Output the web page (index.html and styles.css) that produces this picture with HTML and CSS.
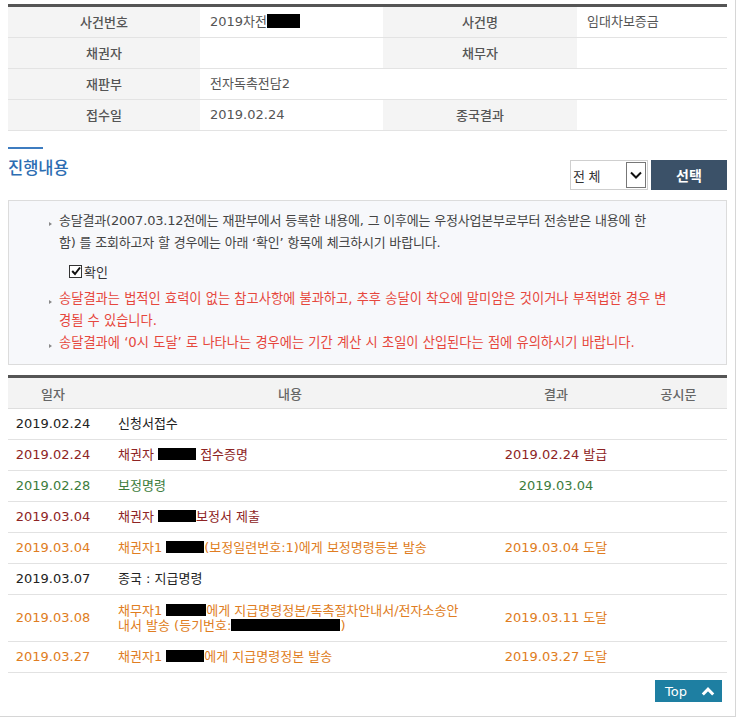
FILE: index.html
```html
<!DOCTYPE html>
<html lang="ko">
<head>
<meta charset="utf-8">
<title>사건 진행내용</title>
<link rel="stylesheet" href="styles.css">
</head>
<body>
<div class="page">
  <table class="info">
    <colgroup><col class="c-l1"><col class="c-v1"><col class="c-l2"><col class="c-v2"></colgroup>
    <tr><th>사건번호</th><td>2019차전<span class="redact redact-top"></span></td><th>사건명</th><td>임대차보증금</td></tr>
    <tr><th>채권자</th><td></td><th>채무자</th><td></td></tr>
    <tr><th>재판부</th><td colspan="3">전자독촉전담2</td></tr>
    <tr><th>접수일</th><td>2019.02.24</td><th>종국결과</th><td></td></tr>
  </table>

  <div class="section-head">
    <h3 class="title">진행내용</h3>
    <div class="filter">
      <div class="select"><span class="select-text">전 체</span><span class="select-arrow"><svg width="12" height="8" viewBox="0 0 12 8"><path d="M1 1.5 L6 6.5 L11 1.5" fill="none" stroke="#111" stroke-width="2"/></svg></span></div>
      <button class="btn">선택</button>
    </div>
  </div>

  <div class="notice">
    <p class="item">송달결과(2007.03.12전에는 재판부에서 등록한 내용에, 그 이후에는 우정사업본부로부터 전송받은 내용에 한<br>함) 를 조회하고자 할 경우에는 아래 ‘확인’ 항목에 체크하시기 바랍니다.</p>
    <div class="check-row"><span class="checkbox"><svg width="10" height="10" viewBox="0 0 10 10"><path d="M1.2 5 L4 8 L9 1.5" fill="none" stroke="#111" stroke-width="2"/></svg></span><span>확인</span></div>
    <p class="item red">송달결과는 법적인 효력이 없는 참고사항에 불과하고, 추후 송달이 착오에 말미암은 것이거나 부적법한 경우 변<br>경될 수 있습니다.</p>
    <p class="item red">송달결과에 ‘0시 도달’ 로 나타나는 경우에는 기간 계산 시 초일이 산입된다는 점에 유의하시기 바랍니다.</p>
  </div>

  <table class="history">
    <colgroup><col class="h-date"><col class="h-cont"><col class="h-res"><col class="h-pub"></colgroup>
    <thead>
      <tr><th>일자</th><th>내용</th><th>결과</th><th>공시문</th></tr>
    </thead>
    <tbody>
      <tr class="k-black"><td class="d">2019.02.24</td><td class="c">신청서접수</td><td class="r"></td><td></td></tr>
      <tr class="k-red"><td class="d">2019.02.24</td><td class="c">채권자 <span class="redact w37"></span> 접수증명</td><td class="r">2019.02.24 발급</td><td></td></tr>
      <tr class="k-green"><td class="d">2019.02.28</td><td class="c">보정명령</td><td class="r">2019.03.04</td><td></td></tr>
      <tr class="k-red"><td class="d">2019.03.04</td><td class="c">채권자 <span class="redact w37"></span>보정서 제출</td><td class="r"></td><td></td></tr>
      <tr class="k-orange"><td class="d">2019.03.04</td><td class="c">채권자1 <span class="redact w38"></span>(보정일련번호:1)에게 보정명령등본 발송</td><td class="r">2019.03.04 도달</td><td></td></tr>
      <tr class="k-black"><td class="d">2019.03.07</td><td class="c">종국 : 지급명령</td><td class="r"></td><td></td></tr>
      <tr class="k-orange tall"><td class="d">2019.03.08</td><td class="c two">채무자1 <span class="redact w40"></span>에게 지급명령정본/독촉절차안내서/전자소송안<br>내서 발송 (등기번호:<span class="redact w109"></span>)</td><td class="r">2019.03.11 도달</td><td></td></tr>
      <tr class="k-orange"><td class="d">2019.03.27</td><td class="c">채권자1 <span class="redact w38"></span>에게 지급명령정본 발송</td><td class="r">2019.03.27 도달</td><td></td></tr>
    </tbody>
  </table>

  <div class="top-row">
    <a class="top-btn" href="#">Top<svg width="14" height="10" viewBox="0 0 14 10"><path d="M1.8 8.5 L7 3.2 L12.2 8.5" fill="none" stroke="#fff" stroke-width="3"/></svg></a>
  </div>
</div>
</body>
</html>
```

FILE: styles.css
```css
html, body {
  margin: 0;
  padding: 0;
  background: #fff;
}

body {
  font-family: "DejaVu Sans", "Noto Sans CJK KR", sans-serif;
  font-size: 13px;
  color: #444;
}

.page {
  box-sizing: border-box;
  width: 736px;
  height: 717px;
  padding: 4px 8px 0 8px;
  border-right: 1px solid #d6d6d6;
  border-bottom: 1px solid #d6d6d6;
}

/* ---------- info table ---------- */
.info {
  width: 719px;
  border-collapse: collapse;
  table-layout: fixed;
  border-top: 3px solid #555;
}
.c-l1 { width: 192px; }
.c-v1 { width: 183px; }
.c-l2 { width: 194px; }
.c-v2 { width: 150px; }

.info th,
.info td {
  height: 30px;
  padding: 0;
  border-bottom: 1px solid #e3e3e3;
  font-size: 13px;
  line-height: 18px;
}
.info th {
  background: #f4f4f4;
  color: #555;
  font-weight: 500;
  text-align: center;
  font-family: "Noto Sans CJK KR", sans-serif;
}
.info td {
  color: #555;
  padding-left: 10px;
  text-align: left;
}

.redact {
  display: inline-block;
  background: #000;
  height: 12px;
  vertical-align: -1px;
}
.redact-top { width: 33px; height: 14px; vertical-align: -2px; }
.w37 { width: 38px; }
.w38 { width: 38px; }
.w40 { width: 40px; }
.w109 { width: 109px; }

/* ---------- section head ---------- */
.section-head {
  display: flex;
  justify-content: space-between;
  align-items: flex-start;
  margin-top: 16px;
}
.title {
  margin: 0;
  font-family: "Noto Sans CJK KR", sans-serif;
  font-size: 16.5px;
  font-weight: 500;
  line-height: 24px;
  color: #2c6db2;
}
.title::before {
  content: "";
  display: block;
  width: 35px;
  height: 2px;
  background: #3d7cc0;
  margin-bottom: 6px;
}
.filter {
  display: flex;
  gap: 3px;
  margin-top: 13px;
}
.select {
  box-sizing: border-box;
  width: 78px;
  height: 30px;
  border: 1px solid #cfcfcf;
  background: #fff;
  display: flex;
  align-items: center;
  justify-content: space-between;
  padding: 0 1px 0 2px;
}
.select-text {
  font-family: "Noto Sans CJK KR", sans-serif;
  font-size: 13px;
  color: #333;
}
.select-arrow {
  box-sizing: border-box;
  width: 20px;
  height: 26px;
  border: 1px solid #777;
  display: flex;
  align-items: center;
  justify-content: center;
}
.btn {
  width: 76px;
  height: 30px;
  border: 0;
  background: #3b5168;
  color: #fff;
  font-family: "Noto Sans CJK KR", sans-serif;
  font-size: 14px;
  font-weight: 700;
  padding: 0;
}

/* ---------- notice ---------- */
.notice {
  box-sizing: border-box;
  margin-top: 10px;
  height: 165px;
  background: #f7f8fb;
  border: 1px solid #dcdcdc;
  padding: 9px 10px 0 40px;
}
.item {
  margin: 0;
  padding-left: 10px;
  text-indent: -10px;
  line-height: 22px;
  color: #444;
  letter-spacing: -0.2px;
}
.item::before {
  content: "";
  display: inline-block;
  width: 0;
  height: 0;
  border-top: 2.5px solid transparent;
  border-bottom: 2.5px solid transparent;
  border-left: 3px solid #888;
  margin-right: 7px;
  vertical-align: -1px;
}
.item.red {
  color: #e6473d;
  margin-top: 6px;
  font-size: 13.25px;
  letter-spacing: 0;
}
.item.red + .item.red {
  margin-top: 0;
}
.check-row {
  display: flex;
  align-items: center;
  gap: 2px;
  height: 22px;
  margin-top: 6px;
  padding-left: 20px;
  color: #333;
}
.checkbox {
  box-sizing: border-box;
  width: 13px;
  height: 13px;
  border: 1px solid #333;
  background: #fff;
  display: flex;
  align-items: center;
  justify-content: center;
}

/* ---------- history ---------- */
.history {
  margin-top: 10px;
  width: 719px;
  border-collapse: collapse;
  table-layout: fixed;
  border-top: 3px solid #555;
}
.h-date { width: 90px; }
.h-cont { width: 384px; }
.h-res { width: 148px; }
.h-pub { width: 97px; }

.history th {
  height: 30px;
  padding: 0;
  background: #f3f3f3;
  color: #666;
  font-family: "Noto Sans CJK KR", sans-serif;
  font-weight: 500;
  font-size: 13px;
  border-bottom: 1px solid #dedede;
  text-align: center;
}
.history td {
  height: 30px;
  padding: 0;
  border-bottom: 1px solid #e2e2e2;
  line-height: 18px;
  font-size: 13px;
}
.history tr.tall td { height: 46px; }
.history td.d { text-align: center; }
.history td.c { padding-left: 20px; }
.history td.c.two { line-height: 15px; }
.history td.r { text-align: center; }

.k-black td { color: #222; }
.k-red td { color: #8e2424; }
.k-green td { color: #3c7c3c; }
.k-orange td { color: #e07d22; }

/* ---------- top ---------- */
.top-row {
  display: flex;
  justify-content: flex-end;
  margin-top: 7px;
  padding-right: 5px;
}
.top-btn {
  box-sizing: border-box;
  width: 67px;
  height: 22px;
  background: #1e7fa2;
  color: #fff;
  text-decoration: none;
  font-family: "DejaVu Sans", sans-serif;
  font-size: 13px;
  display: flex;
  align-items: center;
  justify-content: space-between;
  padding: 0 7px 0 10px;
}
```
